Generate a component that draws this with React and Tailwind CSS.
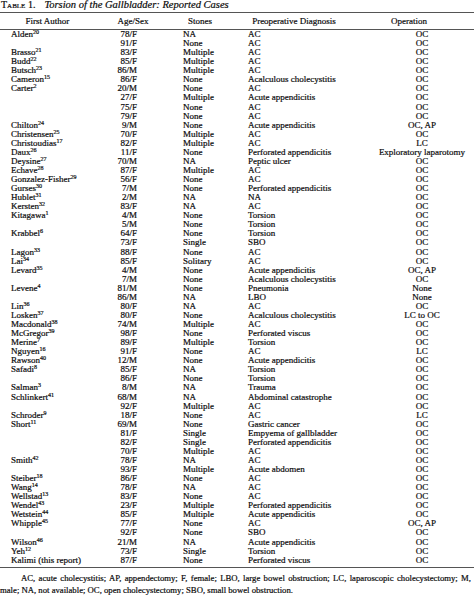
import React from "react";

const rows = [
  ["Alden", "20", "78/F", "NA", "AC", "OC"],
  ["", "", "91/F", "None", "AC", "OC"],
  ["Brasso", "21", "83/F", "Multiple", "AC", "OC"],
  ["Budd", "22", "85/F", "Multiple", "AC", "OC"],
  ["Butsch", "23", "86/M", "Multiple", "AC", "OC"],
  ["Cameron", "15", "86/F", "None", "Acalculous cholecystitis", "OC"],
  ["Carter", "2", "20/M", "None", "AC", "OC"],
  ["", "", "27/F", "Multiple", "Acute appendicitis", "OC"],
  ["", "", "75/F", "None", "AC", "OC"],
  ["", "", "79/F", "None", "AC", "OC"],
  ["Chilton", "24", "9/M", "None", "Acute appendicitis", "OC, AP"],
  ["Christensen", "25", "70/F", "Multiple", "AC", "OC"],
  ["Christoudias", "17", "82/F", "Multiple", "AC", "LC"],
  ["Daux", "26", "11/F", "None", "Perforated appendicitis", "Exploratory laparotomy"],
  ["Deysine", "27", "70/M", "NA", "Peptic ulcer", "OC"],
  ["Echave", "28", "87/F", "Multiple", "AC", "OC"],
  ["Gonzalez-Fisher", "29", "56/F", "None", "AC", "OC"],
  ["Gurses", "30", "7/M", "None", "Perforated appendicitis", "OC"],
  ["Hublet", "31", "2/M", "NA", "NA", "OC"],
  ["Kersten", "32", "83/F", "NA", "AC", "OC"],
  ["Kitagawa", "1", "4/M", "None", "Torsion", "OC"],
  ["", "", "5/M", "None", "Torsion", "OC"],
  ["Krabbel", "6", "64/F", "None", "Torsion", "OC"],
  ["", "", "73/F", "Single", "SBO", "OC"],
  ["Lagon", "33", "88/F", "None", "AC", "OC"],
  ["Lai", "34", "85/F", "Solitary", "AC", "OC"],
  ["Levard", "35", "4/M", "None", "Acute appendicitis", "OC, AP"],
  ["", "", "7/M", "None", "Acalculous cholecystitis", "OC"],
  ["Levene", "4", "81/M", "None", "Pneumonia", "None"],
  ["", "", "86/M", "NA", "LBO", "None"],
  ["Lin", "36", "80/F", "NA", "AC", "OC"],
  ["Losken", "37", "80/F", "None", "Acalculous cholecystitis", "LC to OC"],
  ["Macdonald", "38", "74/M", "Multiple", "AC", "OC"],
  ["McGregor", "39", "98/F", "None", "Perforated viscus", "OC"],
  ["Merine", "7", "89/F", "Multiple", "Torsion", "OC"],
  ["Nguyen", "16", "91/F", "None", "AC", "LC"],
  ["Rawson", "40", "12/M", "None", "Acute appendicitis", "OC"],
  ["Safadi", "8", "85/F", "NA", "Torsion", "OC"],
  ["", "", "86/F", "None", "Torsion", "OC"],
  ["Salman", "3", "8/M", "NA", "Trauma", "OC"],
  ["Schlinkert", "41", "68/M", "NA", "Abdominal catastrophe", "OC"],
  ["", "", "92/F", "Multiple", "AC", "OC"],
  ["Schroder", "9", "18/F", "None", "AC", "LC"],
  ["Short", "11", "69/M", "None", "Gastric cancer", "OC"],
  ["", "", "81/F", "Single", "Empyema of gallbladder", "OC"],
  ["", "", "82/F", "Single", "Perforated appendicitis", "OC"],
  ["", "", "70/F", "Multiple", "AC", "OC"],
  ["Smith", "42", "78/F", "NA", "AC", "OC"],
  ["", "", "93/F", "Multiple", "Acute abdomen", "OC"],
  ["Steiber", "18", "86/F", "None", "AC", "OC"],
  ["Wang", "14", "78/F", "NA", "AC", "OC"],
  ["Wellstad", "13", "83/F", "None", "AC", "OC"],
  ["Wendel", "43", "23/F", "Multiple", "Perforated appendicitis", "OC"],
  ["Wetstein", "44", "85/F", "Multiple", "Acute appendicitis", "OC"],
  ["Whipple", "45", "77/F", "None", "AC", "OC, AP"],
  ["", "", "92/F", "None", "SBO", "OC"],
  ["Wilson", "46", "21/M", "NA", "Acute appendicitis", "OC"],
  ["Yeh", "12", "73/F", "Single", "Torsion", "OC"],
  ["Kalimi (this report)", "", "87/F", "None", "Perforated viscus", "OC"],
];

export default function App() {
  return (
    <div className="w-[474px] h-[597px] bg-white text-[#0a0a0a] [-webkit-text-stroke:0.2px_#0a0a0a] font-['Liberation_Serif',serif] overflow-hidden">
      <div className="h-[12px] text-[10.5px] leading-[10px] pl-[1px] whitespace-nowrap">
        <span className="[font-variant:small-caps] text-[10px]">Table 1.</span>
        <span className="italic ml-[9px]">Torsion of the Gallbladder: Reported Cases</span>
      </div>
      <div className="border-t-[1.5px] border-b-[1.5px] border-[#555] h-[18px] flex items-center text-[9px] leading-[9px] whitespace-nowrap">
        <div className="w-[95px] text-center">First Author</div>
        <div className="w-[76px] text-center">Age/Sex</div>
        <div className="w-[58px] text-center">Stones</div>
        <div className="w-[130px] text-center">Preoperative Diagnosis</div>
        <div className="w-[100px] text-center">Operation</div>
      </div>
      <div>
        {rows.map((r, i) => (
          <div key={i} className="flex h-[9.07px] text-[9px] leading-[9.07px] whitespace-nowrap">
            <div className="pl-[11px] w-[110px]">
              {r[0]}
              {r[1] && <sup className="text-[6px] top-[-3px]">{r[1]}</sup>}
            </div>
            <div className="w-[27px] text-right">{r[2]}</div>
            <div className="w-[46px]" />
            <div className="w-[65px]">{r[3]}</div>
            <div className="w-[124px]">{r[4]}</div>
            <div className="w-[100px] text-center">{r[5]}</div>
          </div>
        ))}
      </div>
      <div className="border-t-[1.5px] border-[#555] mt-[2px] pt-[4px] text-[8.7px] leading-[12px]">
        <div className="pl-[21px] pr-[3px] text-justify [text-align-last:justify] whitespace-nowrap overflow-hidden">
          AC, acute cholecystitis; AP, appendectomy; F, female; LBO, large bowel obstruction; LC, laparoscopic cholecystectomy; M,
        </div>
        <div className="whitespace-nowrap">
          male; NA, not available; OC, open cholecystectomy; SBO, small bowel obstruction.
        </div>
      </div>
    </div>
  );
}
